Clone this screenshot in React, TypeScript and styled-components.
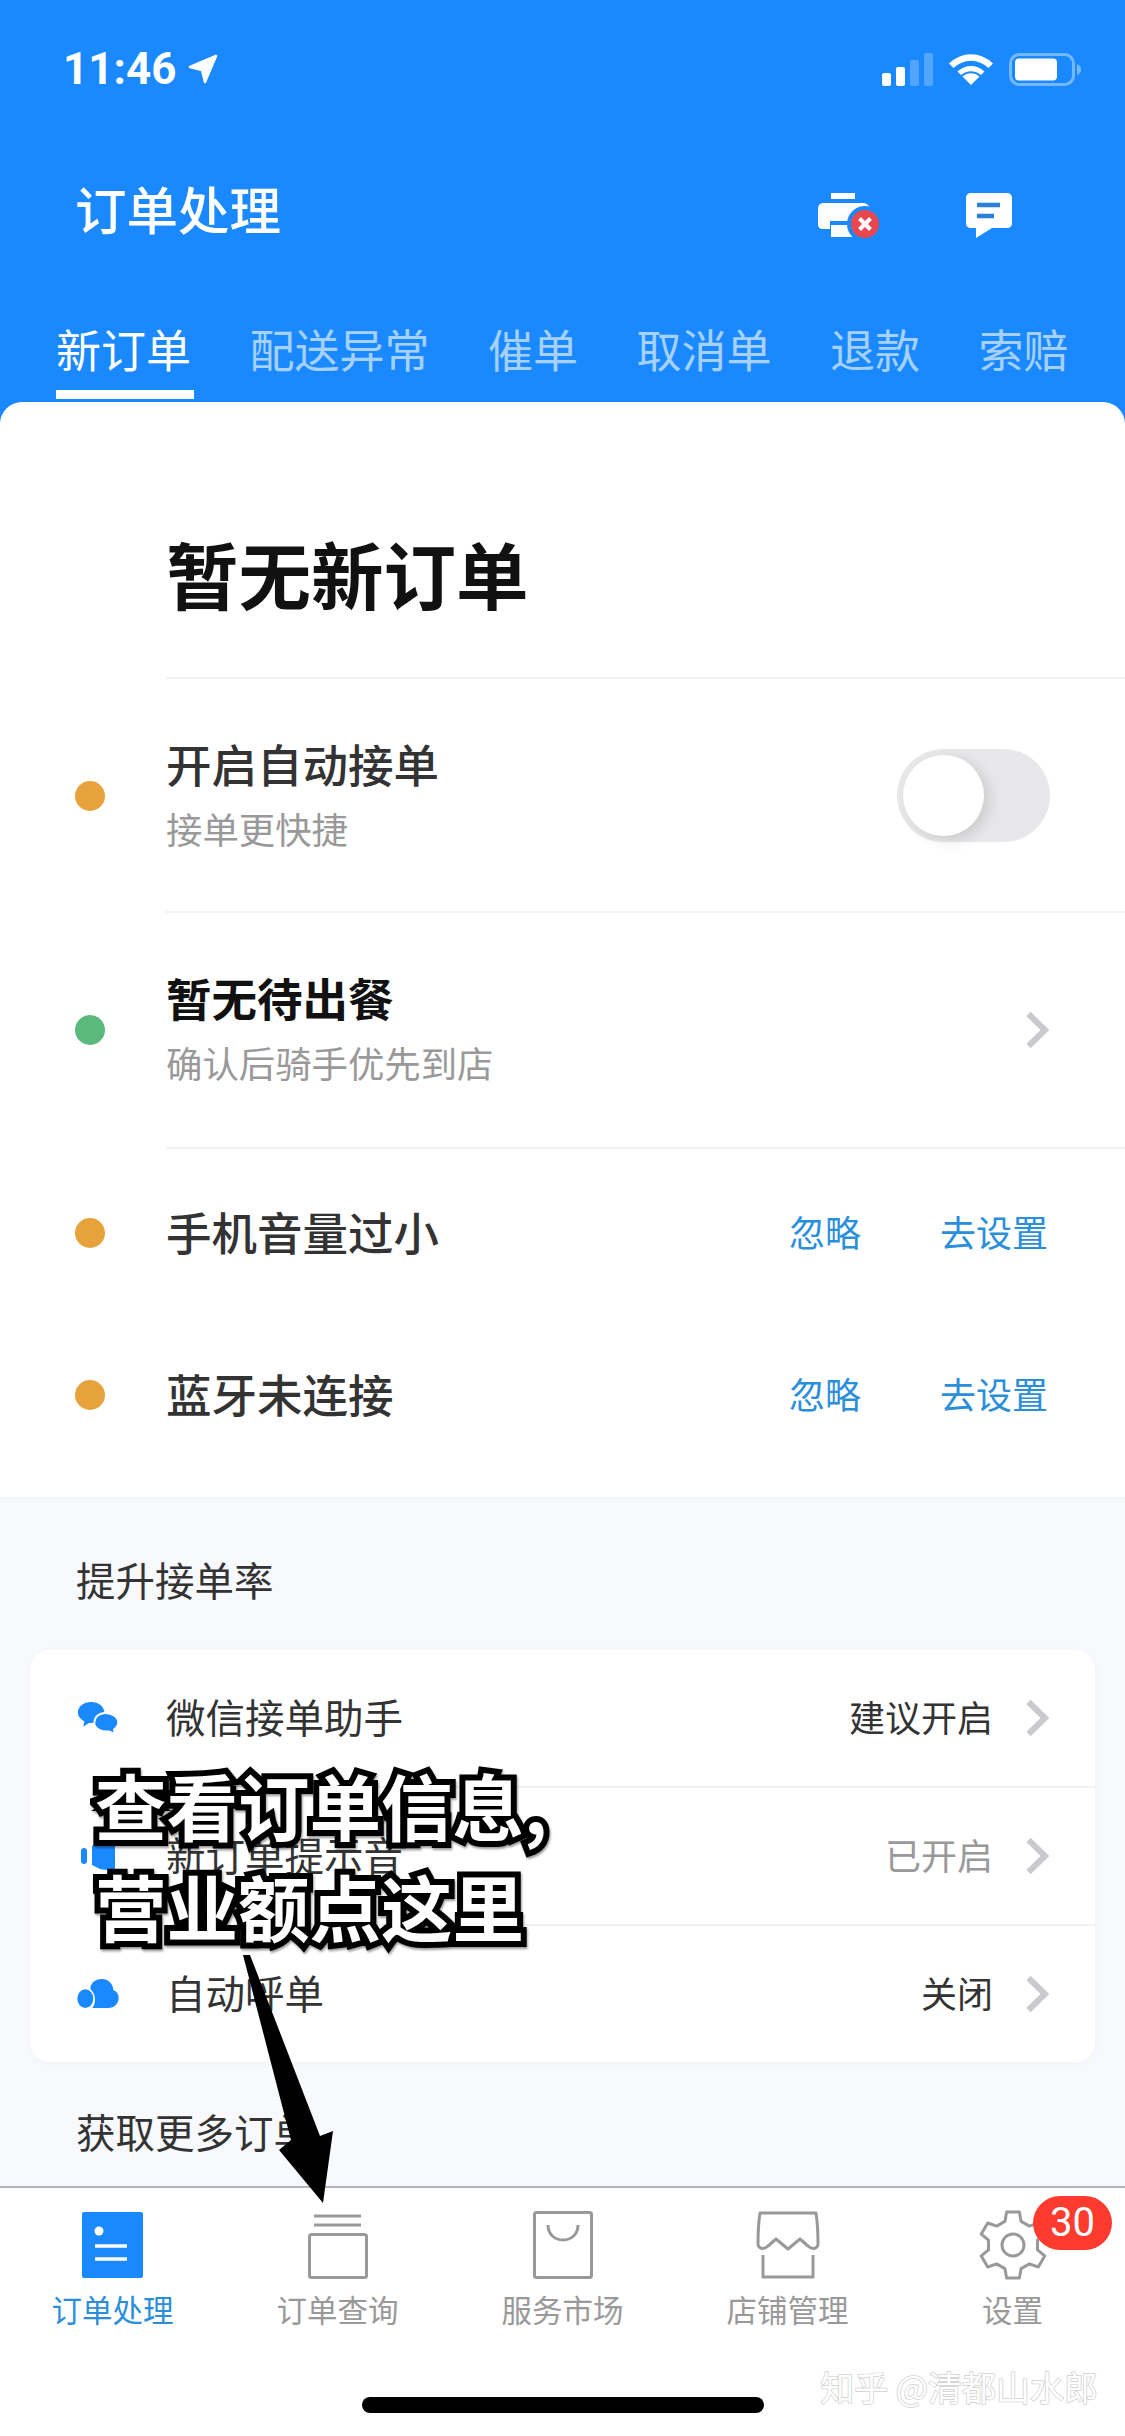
import React, { ReactNode } from "react";
import styled, { createGlobalStyle } from "styled-components";

const FONT = `"Noto Sans CJK SC", "Noto Sans", sans-serif`;

const GlobalStyle = createGlobalStyle`
  html, body { margin: 0; padding: 0; background: #fff; }
  body { font-family: ${FONT}; }
`;

const Page = styled.div`
  position: relative;
  width: 1125px;
  height: 2436px;
  overflow: hidden;
  display: flex;
  flex-direction: column;
  background: #f8f9fd;
`;

const Header = styled.header`
  background: #1a89ff;
  height: 426px;
  flex-shrink: 0;
  display: flex;
  flex-direction: column;
`;

const StatusBar = styled.div`
  height: 138px;
  padding: 0 43px 0 63px;
  display: flex;
  align-items: center;
  justify-content: space-between;
  color: #fff;
`;

const Time = styled.div`
  display: flex;
  align-items: center;
  gap: 12px;
  font-family: Roboto, sans-serif;
  font-weight: 700;
  font-size: 44px;
  line-height: 40px;
`;

const StatusIcons = styled.div`
  display: flex;
  align-items: center;
  gap: 15px;
`;

const TitleRow = styled.div`
  height: 146px;
  padding: 0 113px 0 75px;
  display: flex;
  align-items: center;
  justify-content: space-between;
`;

const Title = styled.h1`
  margin: 0;
  padding-bottom: 6px;
  color: #fff;
  font-size: 51.5px;
  line-height: 60px;
  font-weight: 500;
`;

const TitleIcons = styled.div`
  display: flex;
  align-items: center;
  gap: 86px;
  padding-top: 10px;
`;

const Tabs = styled.div`
  display: flex;
  gap: 58.5px;
  padding-left: 56px;
`;

const Tab = styled.div<{ $active?: boolean }>`
  position: relative;
  padding: 40px 0 25px;
  font-size: 45px;
  line-height: 50px;
  color: ${(p) => (p.$active ? "#fff" : "#a6d1ff")};
  &::after {
    content: "";
    display: ${(p) => (p.$active ? "block" : "none")};
    position: absolute;
    left: 0;
    right: -3px;
    bottom: 0;
    height: 9px;
    background: #fff;
  }
`;

const MainCard = styled.section`
  position: relative;
  background: #fff;
  border-radius: 22px 22px 0 0;
  margin-top: -24px;
  flex-shrink: 0;
  box-shadow: 0 2px 6px rgba(30, 50, 90, 0.03);
`;

const Heading = styled.h2`
  margin: 0 0 0 166px;
  height: 275px;
  box-sizing: border-box;
  padding-top: 117px;
  font-size: 72.5px;
  line-height: 108px;
  font-weight: 700;
  color: #111;
`;

const StatusRow = styled.div<{ $height: number }>`
  position: relative;
  height: ${(p) => p.$height}px;
  box-sizing: border-box;
  padding-top: 57px;
  margin-left: 166px;
  border-top: 2px solid #f2f2f4;
`;

const NoticeDivider = styled.div`
  height: 2px;
  margin-left: 166px;
  background: #f2f2f4;
`;

const NoticeList = styled.div`
  padding: 3px 0 21px;
`;

const NoticeRow = styled.div`
  height: 162px;
  display: flex;
  align-items: center;
  padding: 0 77px 0 75px;
`;

const Dot = styled.span<{ $color: string }>`
  width: 30px;
  height: 30px;
  border-radius: 50%;
  flex-shrink: 0;
  background: ${(p) => p.$color};
  margin-right: 61px;
`;

const RowDot = styled(Dot)`
  position: absolute;
  left: -91px;
  top: 102px;
  margin: 0;
`;

const RowTitle = styled.div<{ $bold?: boolean }>`
  font-size: 45.5px;
  line-height: 54px;
  font-weight: ${(p) => (p.$bold ? 700 : 500)};
  color: ${(p) => (p.$bold ? "#111" : "#333")};
`;

const RowSub = styled.div`
  margin-top: 11px;
  font-size: 36.4px;
  line-height: 54px;
  color: #999;
`;

const RowSide = styled.div`
  position: absolute;
  right: 75px;
  top: 0;
  bottom: 0;
  display: flex;
  align-items: center;
`;

const Toggle = styled.div`
  width: 153px;
  height: 93px;
  border-radius: 47px;
  background: #e8e8ea;
  padding: 6px;
  box-sizing: border-box;
`;

const Knob = styled.div`
  width: 81px;
  height: 81px;
  border-radius: 50%;
  background: #fff;
  box-shadow: 6px 4px 14px rgba(0, 0, 0, 0.12);
`;

const NoticeText = styled.div`
  flex: 1;
  padding-bottom: 5px;
  font-size: 45.5px;
  line-height: 54px;
  font-weight: 500;
  color: #333;
`;

const ActionLink = styled.span`
  padding-bottom: 5px;
  font-size: 36px;
  color: #2b8edb;
  margin-left: 79px;
`;

const Lower = styled.section`
  flex: 1;
  min-height: 0;
  overflow: hidden;
  padding: 57px 30px 0;
`;

const SectionTitle = styled.h3`
  margin: 0 0 0 46px;
  font-size: 39.5px;
  line-height: 50px;
  font-weight: 400;
  color: #333;
`;

const SettingsCard = styled.div`
  margin: 46px 0 44px;
  background: #fff;
  border-radius: 20px;
  box-shadow: 0 1px 8px rgba(30, 50, 90, 0.03);
`;

const SettingRow = styled.div`
  height: 136px;
  box-sizing: border-box;
  display: flex;
  align-items: center;
  padding-right: 45px;
`;

const SettingIcon = styled.div`
  width: 136px;
  display: flex;
  justify-content: center;
`;

const SettingLabel = styled.div`
  flex: 1;
  padding-bottom: 5px;
  font-size: 39.5px;
  color: #333;
`;

const SettingValue = styled.div<{ $muted?: boolean }>`
  padding-bottom: 5px;
  font-size: 36px;
  color: ${(p) => (p.$muted ? "#999" : "#333")};
  margin-right: 33px;
`;

const RowLine = styled.div`
  height: 2px;
  margin-left: 136px;
  background: #f2f2f4;
`;

const TabBar = styled.nav`
  position: relative;
  height: 250px;
  flex-shrink: 0;
  box-sizing: border-box;
  border-top: 2px solid #b4b4b8;
  background: #fff;
  display: grid;
  grid-template-columns: repeat(5, 225px);
  padding-top: 22px;
  align-items: start;
`;

const BarItem = styled.div<{ $active?: boolean }>`
  position: relative;
  display: flex;
  flex-direction: column;
  align-items: center;
  font-size: 30.5px;
  line-height: 40px;
  color: ${(p) => (p.$active ? "#2b8edb" : "#999")};
`;

const BarIcon = styled.div`
  height: 70px;
  margin-bottom: 9px;
  display: flex;
  align-items: center;
  justify-content: center;
`;

const Badge = styled.span`
  position: absolute;
  left: 133px;
  top: -14px;
  width: 79px;
  height: 54px;
  border-radius: 27px;
  background: #ff3b30;
  color: #fff;
  font-family: Roboto, sans-serif;
  font-size: 40px;
  line-height: 54px;
  text-align: center;
`;

const HomeBar = styled.div`
  position: absolute;
  left: 362px;
  top: 209px;
  width: 402px;
  height: 16px;
  border-radius: 8px;
  background: #000;
`;

const Watermark = styled.div`
  position: absolute;
  right: 27px;
  top: 176px;
  font-size: 34px;
  line-height: 46px;
  white-space: nowrap;
  color: #fff;
  -webkit-text-stroke: 1.5px #cfcfcf;
  paint-order: stroke fill;
`;

const Callout = styled.div`
  position: absolute;
  left: 95px;
  top: 1754px;
  font-size: 71.5px;
  line-height: 101px;
  font-weight: 700;
  color: #fff;
  -webkit-text-stroke: 12px #000;
  paint-order: stroke fill;
  white-space: nowrap;
  filter: drop-shadow(1px 2px 1px rgba(0, 0, 0, 0.4));
`;

const ArrowSvg = styled.svg`
  position: absolute;
  left: 230px;
  top: 1950px;
`;

const Chevron = () => (
  <svg width="24" height="38" viewBox="0 0 24 38">
    <path d="M2.5 3 L19 19 L2.5 35" fill="none" stroke="#c9c9ce" strokeWidth="6" />
  </svg>
);

const LocationArrow = () => (
  <svg width="30" height="30" viewBox="0 0 30 30">
    <path d="M28 2 L2 13 L14 16 L17 28 Z" fill="#fff" stroke="#fff" strokeWidth="2.5" strokeLinejoin="round" />
  </svg>
);

const StatusGlyphs = () => (
  <StatusIcons>
    <svg width="51" height="33" viewBox="0 0 51 33">
      <rect x="0" y="20" width="9" height="13" rx="2" fill="#fff" />
      <rect x="14" y="14" width="9" height="19" rx="2" fill="#fff" />
      <rect x="28" y="7" width="9" height="26" rx="2" fill="#fff" opacity="0.25" />
      <rect x="42" y="0" width="9" height="33" rx="2" fill="#fff" opacity="0.25" />
    </svg>
    <svg width="46" height="34" viewBox="0 0 46 34">
      <path d="M23 33 L14.5 24.5 A12.5 12.5 0 0 1 31.5 24.5 Z" fill="#fff" />
      <path d="M9.5 19.5 A19.5 19.5 0 0 1 36.5 19.5 L33 23 A15 15 0 0 0 13 23 Z" fill="#fff" />
      <path d="M1 11.5 A31 31 0 0 1 45 11.5 L40.5 16 A25 25 0 0 0 5.5 16 Z" fill="#fff" />
    </svg>
    <svg width="73" height="33" viewBox="0 0 73 33">
      <rect x="1.5" y="1.5" width="63" height="30" rx="9" fill="none" stroke="#fff" strokeOpacity="0.4" strokeWidth="3" />
      <rect x="6" y="5.5" width="42" height="22" rx="4" fill="#fff" />
      <path d="M68 11 C71 12 72 14 72 16.5 C72 19 71 21 68 22 Z" fill="#fff" fillOpacity="0.4" />
    </svg>
  </StatusIcons>
);

const PrinterIcon = () => (
  <svg width="62" height="46" viewBox="0 0 62 46">
    <path d="M13 0 H37 V6 H13 Z" fill="#fff" />
    <path d="M6 10 H44 C48 10 51 12 52 15 L52 28 H12 V36 H4 C2 36 0 34 0 32 V16 C0 12 2 10 6 10 Z" fill="#fff" />
    <path d="M13 32 H38 V44 H13 Z" fill="#fff" />
    <circle cx="47" cy="31" r="18" fill="#1a89ff" />
    <circle cx="47" cy="31" r="14" fill="#e9474f" />
    <path d="M41.5 25.5 L52.5 36.5 M52.5 25.5 L41.5 36.5" stroke="#fff" strokeWidth="4" />
  </svg>
);

const MessageIcon = () => (
  <svg width="46" height="46" viewBox="0 0 46 46">
    <path d="M5 0 H41 C44 0 46 2 46 5 V30 C46 33 44 35 41 35 H26 L10 45 V35 H5 C2 35 0 33 0 30 V5 C0 2 2 0 5 0 Z" fill="#fff" />
    <path d="M11 12 H34 M11 23 H28" stroke="#2b7fd8" strokeWidth="4.5" />
  </svg>
);

const WechatIcon = () => (
  <svg width="42" height="33" viewBox="0 0 44 36">
    <path d="M14.5 0 C22.5 0 29 5 29 11.5 C29 18 22.5 23 14.5 23 L12 23 L6 27 L7 21 C3 19 0 15.5 0 11.5 C0 5 6.5 0 14.5 0 Z" fill="#1a89ff" />
    <path d="M30 12 C37.5 12 44 16.5 44 22 C44 25.5 42 28 39.5 30 L40 35 L34.5 32 C27 33 18 29.5 18 22.5 C18 16.5 23 12 30 12 Z" fill="#1a89ff" stroke="#fff" strokeWidth="2" />
  </svg>
);

const SpeakerIcon = () => (
  <svg width="34" height="28" viewBox="0 0 34 28">
    <rect x="0" y="6" width="6" height="16" rx="3" fill="#1a89ff" />
    <path d="M11 4 L17 1 C20 0 28 0 34 0 V28 C28 28 20 28 17 26 L11 23 Z" fill="#1a89ff" />
  </svg>
);

const CloudIcon = () => (
  <svg width="42" height="30" viewBox="0 0 44 32">
    <path d="M14 8 C16 3 20 0 26 0 C33 0 38 5 38.5 12 C42 13 44 16.5 44 20 C44 26.5 39 31 33 31 H16 C20 26 20 16 14 11 Z" fill="#1a89ff" />
    <ellipse cx="8.5" cy="21" rx="8.5" ry="10" fill="#1a89ff" />
  </svg>
);

const ProcessIcon = () => (
  <svg width="62" height="68" viewBox="0 0 62 68">
    <rect x="0" y="1" width="61" height="66" rx="2" fill="#1a89ff" />
    <circle cx="17" cy="20" r="4.5" fill="#fff" />
    <path d="M13 35 H45 M13 48 H45" stroke="#fff" strokeWidth="3.5" />
  </svg>
);

const QueryIcon = () => (
  <svg width="60" height="68" viewBox="0 0 60 68">
    <path d="M6 5 H53 M6 14 H53" stroke="#999" strokeWidth="3" />
    <rect x="1.5" y="23.5" width="57" height="43" rx="2" fill="none" stroke="#999" strokeWidth="3" />
  </svg>
);

const BagIcon = () => (
  <svg width="60" height="68" viewBox="0 0 60 68">
    <rect x="1.5" y="1.5" width="57" height="65" rx="2" fill="none" stroke="#999" strokeWidth="3" />
    <path d="M15 14 C15 34 45 34 45 14" fill="none" stroke="#999" strokeWidth="3" />
  </svg>
);

const StoreIcon = () => (
  <svg width="64" height="68" viewBox="0 0 64 68">
    <path d="M4 2 H60 C62 14 62 26 62 34 C60 39 55 38 52 35 L44 28 L32 38 L20 28 L12 35 C9 38 4 39 2 34 C2 26 2 14 4 2 Z" fill="none" stroke="#999" strokeWidth="3" strokeLinejoin="round" />
    <path d="M7 44 V66 H57 V44" fill="none" stroke="#999" strokeWidth="3" />
  </svg>
);

// six teeth, one pointing straight up
const gearPath = (() => {
  const at = (deg: number, r: number) => {
    const a = (deg * Math.PI) / 180;
    return `${(36 + r * Math.cos(a)).toFixed(1)} ${(36 + r * Math.sin(a)).toFixed(1)}`;
  };
  let d = "";
  for (let i = 0; i < 6; i++) {
    const c = -90 + i * 60;
    d += `${i === 0 ? "M" : "L"}${at(c - 19, 25)} L${at(c - 11, 33.5)} L${at(c + 11, 33.5)} L${at(c + 19, 25)} `;
  }
  return d + "Z";
})();

const GearIcon = () => (
  <svg width="72" height="72" viewBox="0 0 72 72">
    <path d={gearPath} fill="none" stroke="#999" strokeWidth="3" strokeLinejoin="round" />
    <circle cx="36" cy="36" r="11" fill="none" stroke="#999" strokeWidth="3" />
  </svg>
);

interface NoticeProps {
  label: string;
}

const Notice: React.FC<NoticeProps> = ({ label }) => (
  <NoticeRow>
    <Dot $color="#e8a23c" />
    <NoticeText>{label}</NoticeText>
    <ActionLink>忽略</ActionLink>
    <ActionLink>去设置</ActionLink>
  </NoticeRow>
);

interface SettingProps {
  icon: ReactNode;
  label: string;
  value: string;
  muted?: boolean;
}

const Setting: React.FC<SettingProps> = ({ icon, label, value, muted }) => (
  <SettingRow>
    <SettingIcon>{icon}</SettingIcon>
    <SettingLabel>{label}</SettingLabel>
    <SettingValue $muted={muted}>{value}</SettingValue>
    <Chevron />
  </SettingRow>
);

const tabs = ["新订单", "配送异常", "催单", "取消单", "退款", "索赔"];

export default function App() {
  return (
    <Page>
      <GlobalStyle />
      <Header>
        <StatusBar>
          <Time>
            11:46
            <LocationArrow />
          </Time>
          <StatusGlyphs />
        </StatusBar>
        <TitleRow>
          <Title>订单处理</Title>
          <TitleIcons>
            <PrinterIcon />
            <MessageIcon />
          </TitleIcons>
        </TitleRow>
        <Tabs>
          {tabs.map((t, i) => (
            <Tab key={t} $active={i === 0}>
              {t}
            </Tab>
          ))}
        </Tabs>
      </Header>

      <MainCard>
        <Heading>暂无新订单</Heading>
        <StatusRow $height={234}>
          <RowDot $color="#e8a23c" />
          <RowTitle>开启自动接单</RowTitle>
          <RowSub>接单更快捷</RowSub>
          <RowSide>
            <Toggle>
              <Knob />
            </Toggle>
          </RowSide>
        </StatusRow>
        <StatusRow $height={236}>
          <RowDot $color="#5bb97b" />
          <RowTitle $bold>暂无待出餐</RowTitle>
          <RowSub>确认后骑手优先到店</RowSub>
          <RowSide>
            <Chevron />
          </RowSide>
        </StatusRow>
        <NoticeDivider />
        <NoticeList>
          <Notice label="手机音量过小" />
          <Notice label="蓝牙未连接" />
        </NoticeList>
      </MainCard>

      <Lower>
        <SectionTitle>提升接单率</SectionTitle>
        <SettingsCard>
          <Setting icon={<WechatIcon />} label="微信接单助手" value="建议开启" />
          <RowLine />
          <Setting icon={<SpeakerIcon />} label="新订单提示音" value="已开启" muted />
          <RowLine />
          <Setting icon={<CloudIcon />} label="自动呼单" value="关闭" />
        </SettingsCard>
        <SectionTitle>获取更多订单</SectionTitle>
      </Lower>

      <TabBar>
        <BarItem $active>
          <BarIcon>
            <ProcessIcon />
          </BarIcon>
          订单处理
        </BarItem>
        <BarItem>
          <BarIcon>
            <QueryIcon />
          </BarIcon>
          订单查询
        </BarItem>
        <BarItem>
          <BarIcon>
            <BagIcon />
          </BarIcon>
          服务市场
        </BarItem>
        <BarItem>
          <BarIcon>
            <StoreIcon />
          </BarIcon>
          店铺管理
        </BarItem>
        <BarItem>
          <BarIcon>
            <GearIcon />
          </BarIcon>
          设置
          <Badge>30</Badge>
        </BarItem>
        <Watermark>知乎 @清都山水郎</Watermark>
        <HomeBar />
      </TabBar>

      <Callout>
        查看订单信息,
        <br />
        营业额点这里
      </Callout>
      <ArrowSvg width="110" height="260" viewBox="0 0 110 260">
        <path d="M13 5 L20 5 L90 186 L103 181 L93 253 L49 200 L61 190 Z" fill="#000" />
      </ArrowSvg>
    </Page>
  );
}
